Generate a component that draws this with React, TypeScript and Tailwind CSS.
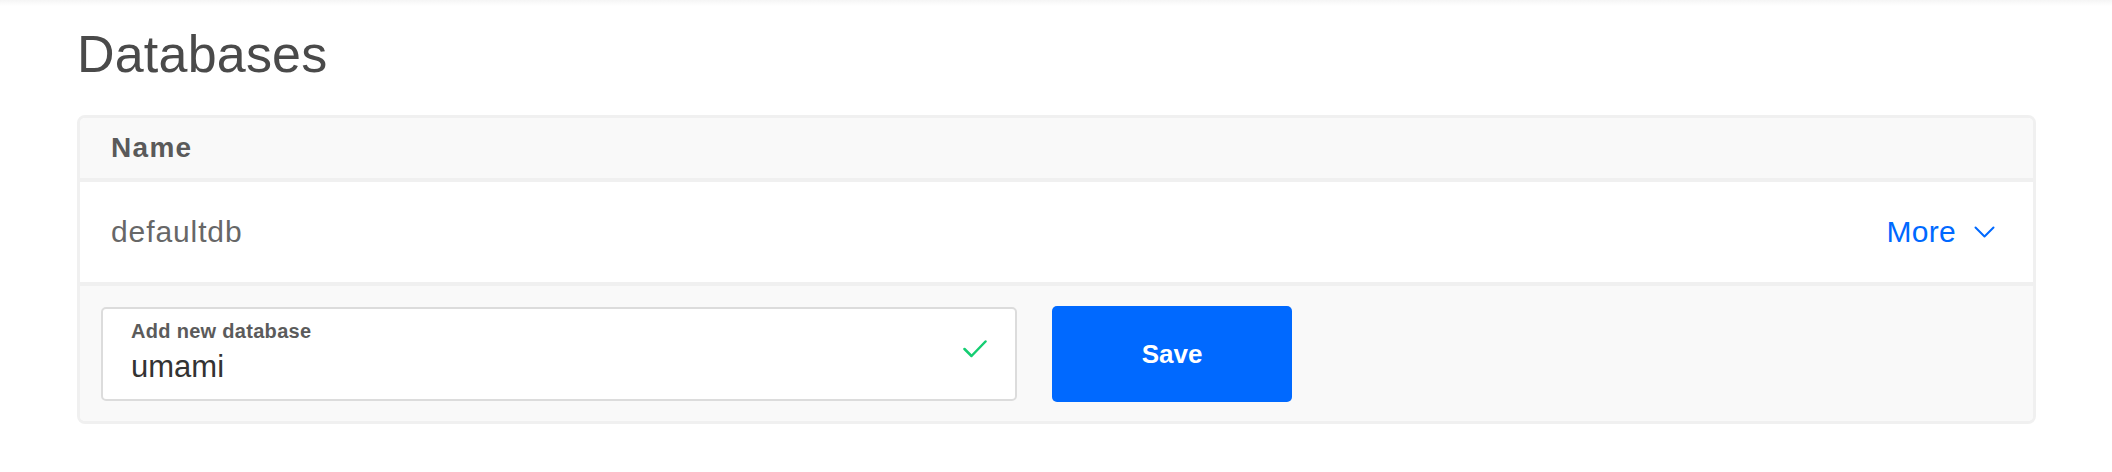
import { useState } from 'react';

const font = { fontFamily: '"Liberation Sans", Arial, sans-serif' };

function ChevronDown() {
  return (
    <svg width="21" height="12" viewBox="0 0 21 12" fill="none" stroke="#0069ff" strokeWidth="2" strokeLinecap="round" strokeLinejoin="round">
      <polyline points="1.5,1.5 10.5,10.5 19.5,1.5" />
    </svg>
  );
}

function CheckMark() {
  return (
    <svg width="24" height="18" viewBox="0 0 24 18" fill="none" stroke="#15cd72" strokeWidth="2.5" strokeLinecap="round" strokeLinejoin="round">
      <polyline points="1.5,9 8.5,16 22.5,1.5" />
    </svg>
  );
}

export default function App() {
  const [dbName, setDbName] = useState('umami');
  const databases = ['defaultdb'];

  return (
    <div className="w-full h-[472px] bg-white overflow-hidden" style={font}>
      {/* faint strip left by the page header */}
      <div className="h-[6px] bg-gradient-to-b from-[#f5f5f5] to-white" />

      <div className="pl-[77px] pr-[76px]">
        <h1 className="mt-[22px] text-[52px] leading-none font-normal text-[#4a4a4a] tracking-[0.2px]">
          Databases
        </h1>

        <div className="mt-[35px] border-[3px] border-[#f0f0f0] rounded-lg overflow-hidden">
          <div className="h-[64px] flex items-center pl-[31px] bg-[#f9f9f9] border-b-4 border-[#f0f0f0]">
            <span className="text-[28px] leading-[60px] font-bold text-[#5a5a5a] tracking-[1.3px]">Name</span>
          </div>

          {databases.map((db) => (
            <div key={db} className="h-[104px] flex items-center justify-between pl-[31px] pr-[38px] bg-white border-b-4 border-[#f0f0f0]">
              <span className="text-[30px] leading-[100px] text-[#676767] tracking-[0.9px]">{db}</span>
              <button className="flex items-center gap-[18px] text-[30px] leading-none text-[#0069ff] tracking-[0.3px]">
                More
                <ChevronDown />
              </button>
            </div>
          ))}

          <div className="h-[135px] flex items-start gap-[35px] pl-[21px] pt-[21px] bg-[#f9f9f9]">
            <div className="w-[916px] h-[94px] flex items-start justify-between bg-white border-2 border-[#dcdcdc] rounded-[5px] pl-[28px] pr-[28px] pt-[10px]">
              <label className="flex flex-col">
                <span className="text-[20px] leading-[24px] font-bold text-[#5b5b5b] tracking-[0.3px]">Add new database</span>
                <input
                  value={dbName}
                  onChange={(e) => setDbName(e.target.value)}
                  className="mt-[6px] w-[600px] text-[31px] leading-[36px] h-[36px] text-[#333] bg-transparent outline-none p-0"
                  style={font}
                />
              </label>
              <div className="mt-[21px]">
                <CheckMark />
              </div>
            </div>
            <button className="w-[240px] h-[96px] -mt-[1px] rounded-[5px] bg-[#0069ff] text-white text-[26px] font-bold">
              Save
            </button>
          </div>
        </div>
      </div>
    </div>
  );
}
